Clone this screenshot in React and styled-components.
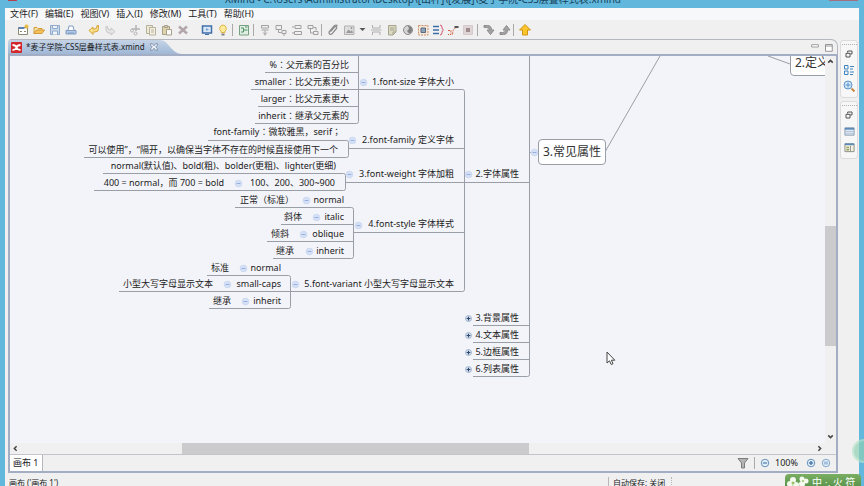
import { createGlobalStyle, styled } from "styled-components";

const GlobalStyle = createGlobalStyle`
  * {
    box-sizing: border-box;
  }
  body {
    margin: 0;
    overflow: hidden;
    font-family: "Noto Sans", "Noto Sans CJK SC", sans-serif;
    font-size: 9px;
    line-height: 12px;
    color: #222;
  }
  button {
    padding: 0;
    border: 0;
    background: none;
    font: inherit;
    color: inherit;
  }
`;

const line = "#9a9ea7";
const frame = "#a3adc3";

const Window = styled.div`
  display: flex;
  flex-direction: column;
  height: 100vh;
  padding: 0 5px;
  background: #62b7dd;
`;

const TitleBar = styled.header`
  display: flex;
  align-items: flex-end;
  justify-content: space-between;
  height: 8px;
  flex: none;
  padding: 0 1px 3px 3px;
  overflow: hidden;
`;

const TitleText = styled.h1`
  margin: 0;
  font-size: 10px;
  line-height: 12px;
  font-weight: 400;
  color: #17435a;
  white-space: nowrap;
`;

const TitleEdge = styled.span`
  align-self: flex-start;
  width: ${({ $width }) => $width};
  height: 1px;
  background: ${({ $color }) => $color};
`;

const Body = styled.div`
  display: flex;
  flex-direction: column;
  flex: 1;
  min-height: 0;
  background: #f0f0f0;
`;

const MenuBar = styled.nav`
  display: flex;
  gap: 7px;
  height: 12px;
  flex: none;
  padding-left: 5px;
  background: #f6f8fa;
`;

const MenuItem = styled.button`
  line-height: 12px;
  white-space: nowrap;
`;

const ToolBar = styled.div`
  display: flex;
  align-items: center;
  height: 19px;
  flex: none;
  padding-left: 10px;
`;

const ToolGroup = styled.div`
  display: flex;
  align-items: center;
  gap: ${({ $gap }) => $gap ?? "1px"};
  margin-right: ${({ $after }) => $after || "0"};
`;

const ToolButton = styled.button`
  display: grid;
  place-items: center;
  width: ${({ $width }) => $width || "15px"};
  height: 15px;
`;

const Separator = styled.span`
  width: 1px;
  height: 12px;
  margin: 0 3px 0 1px;
  background: #a9a9a9;
`;

const Workspace = styled.div`
  display: flex;
  flex: 1;
  min-height: 0;
  padding-left: 3px;
`;

const Editor = styled.main`
  display: flex;
  flex-direction: column;
  flex: 1;
  min-width: 0;
`;

const TabBar = styled.div`
  display: flex;
  justify-content: space-between;
  height: 15px;
  flex: none;
  border-top: 1px solid #b4b7bd;
  border-right: 1px solid #b4b7bd;
  border-radius: 4px 7px 0 0;
  overflow: hidden;
`;

const TabGroup = styled.div`
  display: flex;
`;

const Tab = styled.div`
  display: flex;
  align-items: center;
  gap: 4px;
  padding-left: 3px;
  background: linear-gradient(#c5d3e6, #a0b8d6);
  font-size: 8px;
  white-space: nowrap;
`;

const TabClose = styled.button`
  display: grid;
  place-items: center;
`;

const PaneButtons = styled.div`
  display: flex;
  gap: 5px;
  padding: 0 4px 0 0;
`;

const Pane = styled.div`
  display: flex;
  flex-direction: column;
  flex: 1;
  min-height: 0;
  border: 2px solid ${frame};
`;

const ScrollRow = styled.div`
  display: flex;
  flex: 1;
  min-height: 0;
`;

const Canvas = styled.section`
  position: relative;
  flex: 1;
  overflow: hidden;
  background: #f3f4f9;
`;

const Links = styled.svg`
  position: absolute;
  inset: 0;
  width: 100%;
  height: 100%;
  fill: none;
  stroke: ${line};
`;

const Topic = styled.div`
  position: absolute;
  left: ${({ $left }) => $left}px;
  top: ${({ $y }) => $y - 6}px;
  display: flex;
  justify-content: flex-end;
  width: ${({ $left, $end }) => $end - $left}px;
  white-space: pre;
`;

// colons and semicolons sit in the middle of their cell
const MidPunctuation = styled.span`
  font-family: "Noto Sans CJK JP", sans-serif;
  line-height: 12px;
`;

const MainTopic = styled.div`
  position: absolute;
  left: ${({ $left }) => $left}px;
  top: ${({ $top }) => $top}px;
  padding: 3px 4px;
  border: 1px solid ${line};
  border-radius: 4px;
  background: #fff;
  font-size: 12px;
  line-height: 18px;
  color: #333;
  white-space: nowrap;
`;

const Toggle = styled.button`
  position: absolute;
  left: ${({ $x }) => $x - 4}px;
  top: ${({ $y }) => $y - 4}px;
  display: grid;
  place-items: center;
`;

const Pointer = styled.svg`
  position: absolute;
  left: 596px;
  top: 295px;
`;

const VerticalScroll = styled.div`
  display: flex;
  flex-direction: column;
  width: 11px;
  padding-bottom: 1px;
`;

const HorizontalScroll = styled.div`
  display: flex;
  height: 11px;
  flex: none;
  padding-right: 11px;
`;

const ScrollButton = styled.button`
  display: grid;
  place-items: center;
  width: 11px;
  height: 11px;
  flex: none;
`;

const ScrollSpace = styled.span`
  flex: ${({ $size }) => $size};
`;

const Thumb = styled.span`
  flex: ${({ $size }) => $size};
  background: #cbcbcd;
`;

const SheetBar = styled.div`
  display: flex;
  justify-content: space-between;
  height: 17px;
  flex: none;
  border-top: 1px solid #c3c5ca;
`;

const SheetTab = styled.button`
  padding: 0 3px;
  border-right: 1px solid #b4b7bd;
  background: #fff;
`;

const ZoomTools = styled.div`
  display: flex;
  align-items: center;
  gap: 5px;
  padding-right: 5px;
`;

const ZoomDivider = styled.span`
  width: 1px;
  height: 12px;
  background: #a9a9a9;
`;

const ZoomValue = styled.output`
  width: 26px;
`;

const SideBar = styled.aside`
  display: flex;
  flex-direction: column;
  gap: 3px;
  width: 21px;
  flex: none;
  padding: 1px 1px 0 2px;
`;

const SidePanel = styled.div`
  display: flex;
  flex-direction: column;
  align-items: center;
  gap: 2px;
  height: 58px;
  padding-top: 3px;
  border: 1px solid #dcdcdc;
  border-radius: 3px;
  background: #f7f7f7;
`;

const Grip = styled.span`
  width: 15px;
  border-top: 1px dotted #b0b0b0;
`;

const SideButton = styled.button`
  display: grid;
  place-items: center;
  width: 13px;
  height: 14px;
`;

const StatusBar = styled.footer`
  display: flex;
  height: 13px;
  flex: none;
  padding: 4px 0 0 4px;
  overflow: hidden;
  font-size: 8px;
  white-space: nowrap;
`;

const StatusText = styled.span`
  flex: 599;
`;

const StatusSave = styled.span`
  flex: 251;
`;

const SaveLabel = styled.span`
  display: inline-block;
  padding: 0 6px 0 4px;
  border-left: 1px solid #b8b8b8;
  border-right: 1px dotted #b8b8b8;
`;

const InputBadge = styled.div`
  position: fixed;
  right: 3px;
  bottom: -5px;
  display: flex;
  align-items: center;
  gap: 3px;
  width: 76px;
  height: 17px;
  padding: 0 5px 0 2px;
  border-radius: 4px;
  background: linear-gradient(#7aae62, #4f8b45);
  font-family: "Liberation Serif", "Noto Sans CJK SC", serif;
  font-size: 10px;
  color: #fff;
  white-space: nowrap;
`;

const Bubble = styled.div`
  position: fixed;
  right: -12px;
  bottom: 23px;
  width: 24px;
  height: 24px;
  border: 2px solid #b5e3c8;
  border-radius: 50%;
  background: #8fd0b4;
  opacity: 0.7;
`;

const menus = [
  "文件(F)",
  "编辑(E)",
  "视图(V)",
  "插入(I)",
  "修改(M)",
  "工具(T)",
  "帮助(H)",
];

// text, left, right edge of the text, vertical centre
const topics = [
  ["%：父元素的百分比", 255, 339, 9],
  ["smaller：比父元素更小", 241, 339, 26],
  ["larger：比父元素更大", 248, 339, 43],
  ["inherit：继承父元素的", 245, 339, 60],
  ["1.font-size 字体大小", 358, 444, 26],
  ["font-family：微软雅黑，serif；", 198, 331, 76],
  ["可以使用”，“隔开，以确保当字体不存在的时候直接使用下一个", 74, 328, 94],
  ["2.font-family 定义字体", 347, 444, 84],
  ["normal(默认值)、bold(粗)、bolder(更粗)、lighter(更细)", 93, 326, 110],
  ["400 = normal，而 700 = bold", 84, 214, 127],
  ["100、200、300~900", 234, 325, 127],
  ["3.font-weight 字体加粗", 344, 444, 118],
  ["正常（标准）", 225, 284, 144],
  ["normal", 301, 334, 144],
  ["斜体", 271, 292, 161],
  ["italic", 311, 334, 161],
  ["倾斜", 257, 279, 178],
  ["oblique", 298, 334, 178],
  ["继承", 263, 284, 195],
  ["inherit", 304, 334, 195],
  ["4.font-style 字体样式", 353, 444, 168],
  ["标准", 197, 219, 212],
  ["normal", 238, 271, 212],
  ["小型大写字母显示文本", 109, 203, 228],
  ["small-caps", 222, 271, 228],
  ["继承", 199, 221, 245],
  ["inherit", 240, 271, 245],
  ["5.font-variant 小型大写字母显示文本", 290, 444, 228],
  ["2.字体属性", 463, 509, 118],
  ["3.背景属性", 463, 509, 262],
  ["4.文本属性", 463, 509, 279],
  ["5.边框属性", 463, 509, 296],
  ["6.列表属性", 463, 509, 313],
];

const expanded = [
  [353, 26],
  [342, 84],
  [339, 118],
  [348, 169],
  [285, 228],
  [458, 118],
  [524, 96],
  [228, 127],
  [296, 144],
  [306, 161],
  [293, 178],
  [299, 195],
  [233, 212],
  [217, 228],
  [235, 245],
];

const collapsed = [
  [458, 262],
  [458, 279],
  [458, 296],
  [458, 313],
];

const links = [
  // 1.font-size
  "M348.5 0V65.5q0 2 -2 2H245M255 16.5H348M241 33.5H452.5q2 0 2 2V233.5q0 2 -2 2H109M248 50.5H348",
  // 2.font-family
  "M198 84.5H336.5q2 0 2 2V99.5q0 2 -2 2H74M338 92.5H454",
  // 3.font-weight
  "M93 117.5H333.5q2 0 2 2V132.5q0 2 -2 2H84M335 126.5H519",
  // 4.font-style
  "M225 151.5H341.5q2 0 2 2V200.5q0 2 -2 2H263M271 168.5H343M257 185.5H343M343 176.5H454",
  // 5.font-variant
  "M197 219.5H278.5q2 0 2 2V250.5q0 2 -2 2H199",
  // branches on the right
  "M519.5 0V318.5q0 2 -2 2H463M463 269.5H519M463 286.5H519M463 303.5H519M519 96.5H528",
  "M595 96L650 0M758 0L780 8",
];

const Icon = ({ size = 12, color = "#a0a0a0", fill = "none", children }) => (
  <svg
    width={size}
    height={size}
    viewBox="0 0 12 12"
    fill={fill}
    stroke={color}
    aria-hidden="true"
  >
    {children}
  </svg>
);

const icons = {
  new: (
    <Icon color="#8d8a72">
      <path d="M1.5 3.5h9v7h-9z" fill="#fff" />
      <path d="M1.5 4h6" stroke="#5c83b8" strokeWidth="2" />
      <path d="M3 7.5h2M7 7.5h2" />
      <path d="M9.5 0.5v4M7.5 2.5h4" stroke="#e8b93c" strokeWidth="2" />
    </Icon>
  ),
  open: (
    <Icon color="#d29a38">
      <path d="M1 9.5V3.5h3l1 1h4v1.5" fill="#f8e3a7" />
      <path d="M1 9.5 3.5 6H11.5L9 9.5z" fill="#f5c35c" />
    </Icon>
  ),
  save: (
    <Icon color="#8ea9c9">
      <path d="M1.5 1.5h9v9h-9z" fill="#c9d9eb" />
      <path d="M3.5 1.5h5v3h-5zM3.5 10.5v-3.5h5v3.5" fill="#f1f5fa" />
    </Icon>
  ),
  print: (
    <Icon color="#7e9cc4">
      <path d="M3 6l1-4h4l1 4" fill="#fff" />
      <path d="M1 6.5h10v3.5H1z" fill="#b4c9e4" />
      <path d="M3 9h6" />
    </Icon>
  ),
  undo: (
    <Icon color="#d6a33a">
      <path d="M1 6.5 5 3v2h2q2 0 2-3.5h1.5v3q0 3.5-3.5 3.5H5v2.5z" fill="#fbe08a" />
    </Icon>
  ),
  redo: (
    <Icon color="#c6c6c6">
      <path d="M11 7.5 7 4v2H5.5Q3.5 6 3.5 2.5H2v2Q2 9 5.5 9H7v2z" fill="#e6e6e6" />
    </Icon>
  ),
  cut: (
    <Icon color="#b3b3b3">
      <path d="M7 1v6M3 5h8" strokeWidth="1.5" />
      <circle cx="3" cy="6.5" r="1.5" />
      <circle cx="6.5" cy="9.5" r="1.5" />
    </Icon>
  ),
  copy: (
    <Icon color="#b5b19c">
      <path d="M1.5 1.5h6v8h-6z" fill="#eee9d2" />
      <path d="M4.5 3.5h6v7.5h-6z" fill="#f4f1e3" />
      <path d="M6 6h3M6 8h3" />
    </Icon>
  ),
  paste: (
    <Icon color="#a8a187">
      <path d="M1.5 2.5h7v8h-7z" fill="#dfd3ae" />
      <path d="M3.5 1.5h3v2h-3z" fill="#ccc" />
      <path d="M5.5 5.5h5v5.5h-5z" fill="#fafafa" />
    </Icon>
  ),
  remove: (
    <Icon color="#b3a6a9">
      <path d="M2 2.5 10 9.5M10 2.5 2 9.5" strokeWidth="2.5" />
    </Icon>
  ),
  present: (
    <Icon color="#416fa8">
      <path d="M1.5 2h9v7h-9z" fill="#d9e8f8" strokeWidth="1.5" />
      <path d="M4 10.5h4" />
      <path d="M5 4l3 1.5L5 7z" fill="#7fa3cf" stroke="none" />
    </Icon>
  ),
  bulb: (
    <Icon color="#e3b445">
      <path d="M6 1a3.5 3.5 0 0 0-2 6.2V8.5h4V7.2A3.5 3.5 0 0 0 6 1z" fill="#fdeb9c" />
      <path d="M4.5 10.5h3" stroke="#808080" strokeWidth="2" />
    </Icon>
  ),
  map: (
    <Icon color="#76a283">
      <path d="M1.5 1.5h9v9.5h-9z" fill="#e1eee3" />
      <path d="M3 4h2.5M7 3h2.5M7 6h2.5M3 8h2.5M5.5 4v4M5 6h2" stroke="#4f9265" />
    </Icon>
  ),
  topic: (
    <Icon>
      <path d="M2.5 1.5h7v2.5h-7zM2.5 6h7M6 6.5v5M4 8.5l2 2 2-2" />
    </Icon>
  ),
  subtopic: (
    <Icon>
      <path d="M1 1.5h5.5v4H1zM3.5 6v2.5h3M7 6.5h4v3H7zM9 10v2" />
    </Icon>
  ),
  before: (
    <Icon>
      <path d="M4 1.5h6v3H4zM3.5 7.5h7v3h-7zM1 3h2M1 9h2" />
    </Icon>
  ),
  parent: (
    <Icon>
      <path d="M1 1.5h5v3H1zM6.5 3.5h2.5v3M3.5 5v4h3M6.5 7.5h4.5v3H6.5z" />
    </Icon>
  ),
  clip: (
    <Icon color="#8d8d8d">
      <path
        d="M3.5 7.5 7.5 3q1.5-1 2 0t-.5 2L5 9.8q-1.5 1.2-2.5 0t0-2.3L7.5 1.5q2-1 3 .5"
        strokeWidth="1.3"
      />
    </Icon>
  ),
  image: (
    <Icon color="#b1b1b1">
      <path d="M1.5 2h9.5v8.5H1.5z" fill="#dedede" />
      <path d="M3 9l2.5-3.5 2 2L9 6l1 3z" fill="#999" stroke="none" />
      <circle cx="8.5" cy="4" r="1" fill="#999" stroke="none" />
    </Icon>
  ),
  caret: (
    <Icon size={9} fill="#555" color="none">
      <path d="M2 4h8L6 8z" />
    </Icon>
  ),
  label: (
    <Icon color="#b0b0b0">
      <path d="M2.5 1v3h7.5V1M1 6h10.5M2.5 11V8h7.5v3" />
    </Icon>
  ),
  note: (
    <Icon color="#a5a48e">
      <path d="M2.5 1.5h7.5v6.5l-3 3H2.5z" fill="#dcdbc1" />
      <path d="M4 4h4.5M4 6h4.5M7 11V8h3" />
    </Icon>
  ),
  globe: (
    <Icon color="#8b8b8b">
      <circle cx="6" cy="6" r="4.5" fill="#d4d4d4" />
      <path d="M6 2q4 0 4 4 0 3-3 3.5L5 7l2-2z" fill="#808080" stroke="none" />
    </Icon>
  ),
  boundary: (
    <Icon color="#c9906b">
      <path d="M1.5 1.5h9.5v9.5H1.5z" fill="#f6e8d8" strokeDasharray="2 1" />
      <path d="M4 4h4.5v4.5H4z" fill="#8ea3b8" stroke="#596b80" />
    </Icon>
  ),
  summary: (
    <Icon color="#3c6fa8">
      <path d="M1 2.5h6M1 6h6M1 9.5h6" strokeWidth="1.5" />
      <path d="M8 1q2 0 2 2.5 0 2 1.5 2.5Q10 6.5 10 8.5 10 11 8 11" stroke="#d2526d" />
    </Icon>
  ),
  relation: (
    <Icon color="#d2603f">
      <path d="M1 6.5h3v4H1M5.5 10.5q.5-6 3-6.500" strokeDasharray="2 1" />
      <path d="M7.5 3h4" stroke="#555" strokeWidth="2" />
    </Icon>
  ),
  marker: (
    <Icon color="#d6cacc">
      <path d="M1.5 1.5h9v9h-9z" fill="#dfd4d6" />
      <path d="M4 4h4v4H4z" fill="#a18c90" stroke="none" />
    </Icon>
  ),
  drill: (
    <Icon color="#8c8c8c">
      <path d="M1 1.500h3.500q4 0 4 4.500h2.500L7.500 10.500 4 6h2.500q0-2.500-3-2.500H1z" fill="#a3a3a3" />
    </Icon>
  ),
  drillUp: (
    <Icon color="#8c8c8c">
      <path d="M1 10.500h3.500q4 0 4-4.500h2.500L7.500 1.500 4 6h2.500q0 2.500-3 2.500H1z" fill="#a3a3a3" />
    </Icon>
  ),
  upgrade: (
    <Icon color="#cf9414">
      <path d="M6 .5 11.5 6H8.5v5h-5V6H.5z" fill="#fcc52d" />
    </Icon>
  ),
  restore: (
    <Icon size={8} color="#555">
      <path d="M4 4V1.5h6.5V6H8M1.5 5h6v5.5h-6z" strokeWidth="1.5" />
    </Icon>
  ),
  outline: (
    <Icon color="#3c84c0">
      <path d="M1.5 1.5h3.5v3.5H1.5zM1.5 7h3.5v3.5H1.5zM7 2.5h4M7 5h3M7 8h4M7 10.5h3" />
    </Icon>
  ),
  overview: (
    <Icon color="#5b94c9">
      <path d="M8.5 8.5 11.5 11.5" stroke="#c98a45" strokeWidth="2" />
      <circle cx="5" cy="5" r="4" fill="#d5e8f8" />
      <path d="M5 2.5v5M2.5 5h5" />
    </Icon>
  ),
  properties: (
    <Icon size={11} color="#8799ad">
      <path d="M1 2h10v8H1z" fill="#dfeaf5" />
      <path d="M1 3h10" stroke="#5d8ab8" strokeWidth="2" />
      <path d="M1 6h10M1 8h10" stroke="#b3c4d6" />
    </Icon>
  ),
  markers: (
    <Icon size={11} color="#878a80">
      <path d="M1 2h10v8.5H1z" fill="#f5f2e2" />
      <path d="M1 2.5h10" stroke="#5d8ab8" strokeWidth="2" />
      <path d="M7 4v6" />
      <path d="M2.5 6h3M2.5 8.5h3" stroke="#98a262" strokeWidth="1.5" />
    </Icon>
  ),
  filter: (
    <Icon color="#7c7c7c">
      <path d="M1 1.5h10L7.5 6v5h-3V6z" fill="#b3b3b3" />
    </Icon>
  ),
  zoomOut: (
    <Icon size={10} color="#4f7fae">
      <circle cx="6" cy="6" r="4.5" fill="#e4effa" />
      <path d="M3.5 6h5" strokeWidth="1.5" />
    </Icon>
  ),
  zoomIn: (
    <Icon size={10} color="#4f7fae">
      <circle cx="6" cy="6" r="4.5" fill="#e4effa" />
      <path d="M3.5 6h5M6 3.5v5" strokeWidth="1.8" />
    </Icon>
  ),
  zoomFit: (
    <Icon size={10} color="#6f98c2">
      <circle cx="6" cy="6" r="4.5" fill="#e4effa" />
      <path d="M3.5 5h5M3.5 7h5" />
    </Icon>
  ),
  minus: (
    <Icon size={9} color="#c6d5f0">
      <circle cx="6" cy="6" r="4.5" fill="#d5e0f5" />
      <path d="M3.5 6h5" stroke="#7f9fdb" />
    </Icon>
  ),
  plus: (
    <Icon size={9} color="#8fa5c3">
      <circle cx="6" cy="6" r="4" fill="#d9e4f3" />
      <path d="M3.5 6h5M6 3.5v5" stroke="#2d4669" strokeWidth="1.5" />
    </Icon>
  ),
  minimize: (
    <Icon size={8} color="#777">
      <path d="M1 2.5h10v3.5H1z" fill="#fff" />
    </Icon>
  ),
  maximize: (
    <Icon size={9} color="#777">
      <path d="M2 2h9v9H2zM2 4h9" fill="#fff" />
    </Icon>
  ),
  close: (
    <Icon size={10} color="#7485a0">
      <path d="M2 2h2l2 2.5L8 2h2v2L8 6l2 2v2H8L6 7.5 4 10H2V8l2-2-2-2z" fill="#eef2f8" />
    </Icon>
  ),
  logo: (
    <svg width="11" height="11" viewBox="0 0 11 11" aria-hidden="true">
      <rect width="11" height="11" rx="1" fill="#d3262d" />
      <path
        d="M1.5 3q3 0 4 2.5Q6.500 3 9.500 3M1.500 8q3 0 4-2.500Q6.500 8 9.500 8"
        fill="none"
        stroke="#fff"
        strokeWidth="1.8"
      />
    </svg>
  ),
};

const arrows = {
  up: "M3 7.5 6 4.5 9 7.5",
  down: "M3 4.5 6 7.5 9 4.5",
  left: "M7.5 3 4.5 6 7.5 9",
  right: "M4.5 3 7.5 6 4.5 9",
};

const Arrow = ({ to }) => (
  <ScrollButton aria-label={`scroll ${to}`}>
    <Icon size={9} color="#444">
      <path d={arrows[to]} strokeWidth="2" />
    </Icon>
  </ScrollButton>
);

const Tools = ({ names, gap, after }) => (
  <ToolGroup $gap={gap} $after={after}>
    {names.map((name) => (
      <ToolButton
        key={name}
        aria-label={name}
        $width={name === "caret" ? "10px" : undefined}
      >
        {icons[name]}
      </ToolButton>
    ))}
  </ToolGroup>
);

const TopicText = ({ text }) =>
  text
    .split(/([：；])/)
    .map((part, i) =>
      i % 2 ? <MidPunctuation key={i}>{part}</MidPunctuation> : part
    );

const MindMap = () => (
  <Canvas>
    <Links>
      {links.map((d) => (
        <path key={d} d={d} />
      ))}
    </Links>
    {topics.map(([text, left, end, y]) => (
      <Topic key={`${text}${y}`} $left={left} $end={end} $y={y}>
        <span>
          <TopicText text={text} />
        </span>
      </Topic>
    ))}
    <MainTopic $left={528} $top={83}>
      3.常见属性
    </MainTopic>
    <MainTopic $left={780} $top={-6}>
      2.定义
    </MainTopic>
    {expanded.map(([x, y]) => (
      <Toggle key={`${x}-${y}`} $x={x} $y={y} aria-label="collapse">
        {icons.minus}
      </Toggle>
    ))}
    {collapsed.map(([x, y]) => (
      <Toggle key={`${x}-${y}`} $x={x} $y={y} aria-label="expand">
        {icons.plus}
      </Toggle>
    ))}
    <Pointer width="10" height="15" viewBox="0 0 10 15" aria-hidden="true">
      <path
        d="M1 1V12L3.5 9.8 5.2 13.5 7 12.7 5.4 9.2H8.8z"
        fill="#fff"
        stroke="#444"
      />
    </Pointer>
  </Canvas>
);

export default function App() {
  return (
    <>
      <GlobalStyle />
      <Window>
        <TitleBar>
          <TitleEdge $width="9px" $color="#b5424c" />
          <TitleText>
            XMind - C:\Users\Administrator\Desktop\[出杯]\[发展]\麦子学院-CSS层叠样式表.xmind
          </TitleText>
          <TitleEdge $width="29px" $color="#a0717f" />
        </TitleBar>
        <Body>
          <MenuBar>
            {menus.map((menu) => (
              <MenuItem key={menu}>{menu}</MenuItem>
            ))}
          </MenuBar>
          <ToolBar>
            <Tools names={["new", "open", "save", "print"]} after="8px" />
            <Tools names={["undo", "redo"]} after="10px" />
            <Tools names={["cut", "copy", "paste", "remove"]} after="9px" />
            <Tools names={["present", "bulb"]} after="1px" />
            <Separator />
            <Tools names={["map"]} after="1px" />
            <Separator />
            <Tools names={["topic", "subtopic", "before", "parent"]} />
            <Separator />
            <Tools
              names={["clip", "image", "caret", "label", "note", "globe"]}
            />
            <Tools
              names={["boundary", "summary", "relation", "marker"]}
              gap="0"
              after="1px"
            />
            <Separator />
            <Tools names={["drill", "drillUp"]} />
            <Separator />
            <Tools names={["upgrade"]} />
          </ToolBar>
          <Workspace>
            <Editor>
              <TabBar>
                <TabGroup>
                  <Tab>
                    {icons.logo}
                    <span>*麦子学院-CSS层叠样式表.xmind</span>
                    <TabClose aria-label="close tab">{icons.close}</TabClose>
                  </Tab>
                  <svg width="26" height="14" viewBox="0 0 26 14">
                    <defs>
                      <linearGradient id="tail" x1="0" y1="0" x2="0" y2="1">
                        <stop offset="0" stopColor="#c5d3e6" />
                        <stop offset="1" stopColor="#a0b8d6" />
                      </linearGradient>
                    </defs>
                    <path
                      d="M0 0C7 0 9 5 13 9s6 5 12 5H0z"
                      fill="url(#tail)"
                    />
                  </svg>
                </TabGroup>
                <PaneButtons>
                  <TabClose aria-label="minimize">{icons.minimize}</TabClose>
                  <TabClose aria-label="maximize">{icons.maximize}</TabClose>
                </PaneButtons>
              </TabBar>
              <Pane>
                <ScrollRow>
                  <MindMap />
                  <VerticalScroll>
                    <Arrow to="up" />
                    <ScrollSpace $size={159} />
                    <Thumb $size={121} />
                    <ScrollSpace $size={85} />
                    <Arrow to="down" />
                  </VerticalScroll>
                </ScrollRow>
                <HorizontalScroll>
                  <Arrow to="left" />
                  <ScrollSpace $size={161} />
                  <Thumb $size={346} />
                  <ScrollSpace $size={284} />
                  <Arrow to="right" />
                </HorizontalScroll>
                <SheetBar>
                  <SheetTab>画布 1</SheetTab>
                  <ZoomTools>
                    <TabClose aria-label="filter">{icons.filter}</TabClose>
                    <ZoomDivider />
                    <TabClose aria-label="zoom out">{icons.zoomOut}</TabClose>
                    <ZoomValue>100%</ZoomValue>
                    <TabClose aria-label="zoom in">{icons.zoomIn}</TabClose>
                    <TabClose aria-label="fit map">{icons.zoomFit}</TabClose>
                  </ZoomTools>
                </SheetBar>
              </Pane>
            </Editor>
            <SideBar>
              <SidePanel>
                <Grip />
                <SideButton aria-label="restore">{icons.restore}</SideButton>
                <SideButton aria-label="outline">{icons.outline}</SideButton>
                <SideButton aria-label="overview">{icons.overview}</SideButton>
              </SidePanel>
              <SidePanel>
                <Grip />
                <SideButton aria-label="restore">{icons.restore}</SideButton>
                <SideButton aria-label="properties">
                  {icons.properties}
                </SideButton>
                <SideButton aria-label="markers">{icons.markers}</SideButton>
              </SidePanel>
            </SideBar>
          </Workspace>
          <StatusBar>
            <StatusText>画布 ('画布 1')</StatusText>
            <StatusSave>
              <SaveLabel>自动保存: 关闭</SaveLabel>
            </StatusSave>
          </StatusBar>
        </Body>
      </Window>
      <Bubble />
      <InputBadge>
        <svg width="22" height="16" viewBox="0 0 22 16" aria-hidden="true">
          <g fill="#f4faee">
            <circle cx="6" cy="5" r="3" />
            <circle cx="3" cy="9" r="3" />
            <circle cx="9" cy="10" r="3" />
            <circle cx="15" cy="4" r="2.5" />
            <circle cx="19" cy="6" r="2.5" />
            <circle cx="15" cy="9" r="3" />
          </g>
          <circle cx="6" cy="8" r="1.5" fill="#9cc466" />
          <circle cx="16" cy="6" r="1" fill="#9cc466" />
        </svg>
        <span>中 ·, 火 符</span>
      </InputBadge>
    </>
  );
}
